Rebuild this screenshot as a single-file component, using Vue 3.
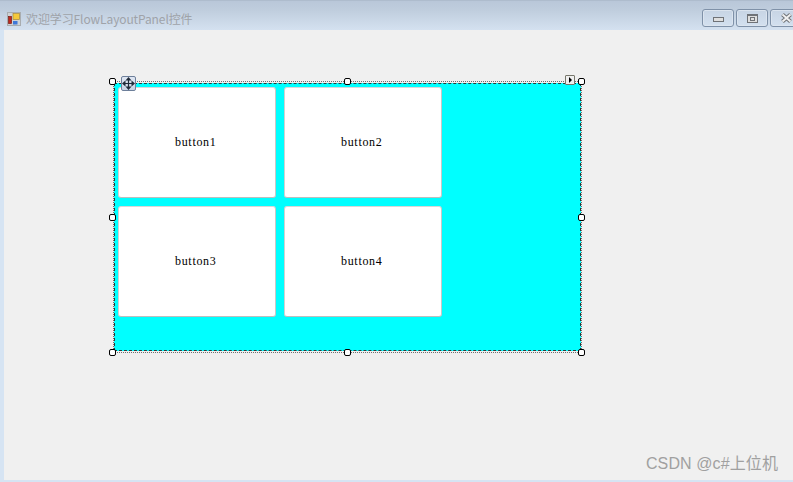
<script setup>
const buttons = ['button1', 'button2', 'button3', 'button4']
const handles = ['tl', 'tc', 'tr', 'ml', 'mr', 'bl', 'bc', 'br']
</script>

<template>
  <div class="window">
    <header class="titlebar">
      <div class="title">
        <svg class="app-icon" width="14" height="14" viewBox="0 0 14 14">
          <rect x="0.5" y="0.5" width="13" height="13" fill="#cfd3d6" stroke="#a9adb0" />
          <rect x="1.5" y="4.5" width="3" height="7" fill="#c0281c" stroke="#7a1a14" stroke-width="0.7" />
          <rect x="6" y="1.5" width="6.5" height="6" fill="#f5c93a" stroke="#a88a3a" stroke-width="0.7" />
          <rect x="6" y="9" width="4.5" height="3.5" fill="#3f78d8" />
        </svg>
        <span class="caption">欢迎学习FlowLayoutPanel控件</span>
      </div>
      <div class="controls">
        <div class="ctl">
          <span class="glyph-min"></span>
        </div>
        <div class="ctl">
          <span class="glyph-max"></span>
        </div>
        <div class="ctl">
          <svg width="13" height="10" viewBox="0 0 13 10">
            <path d="M2.5 1.5 L10.5 8.5 M10.5 1.5 L2.5 8.5" stroke="#6f7277" stroke-width="4" />
            <path d="M2.5 1.5 L10.5 8.5 M10.5 1.5 L2.5 8.5" stroke="#f0f0f0" stroke-width="2" />
          </svg>
        </div>
      </div>
    </header>

    <main class="client">
      <div class="selection">
        <div class="panel">
          <button v-for="b in buttons" :key="b" class="btn">{{ b }}</button>
        </div>
        <span v-for="h in handles" :key="h" class="handle" :class="h"></span>
        <div class="move-glyph">
          <svg width="13" height="13" viewBox="0 0 13 13">
            <path d="M6.5 2 V11 M2 6.5 H11" stroke="#1f2a38" stroke-width="1.2" fill="none" />
            <path d="M6.5 0 L9.5 3.5 H3.5 Z M6.5 13 L9.5 9.5 H3.5 Z M0 6.5 L3.5 3.5 V9.5 Z M13 6.5 L9.5 3.5 V9.5 Z" fill="#1f2a38" />
          </svg>
        </div>
        <div class="smart-tag"><span class="tri"></span></div>
      </div>
      <div class="watermark">CSDN @c#上位机</div>
    </main>
  </div>
</template>

<style scoped>
.window {
  width: 793px;
  height: 482px;
  display: flex;
  flex-direction: column;
  background: #d6e4f3;
  overflow: hidden;
  position: relative;
}
.titlebar {
  height: 30px;
  flex: none;
  display: flex;
  justify-content: space-between;
  box-sizing: border-box;
  padding: 8px 0 0 7px;
  background: linear-gradient(to bottom, #b9c7d9 0, #bfcddd 30%, #d4e1f0 100%);
  border-top: 1px solid #aebccd;
}
.title {
  display: flex;
  align-items: center;
  gap: 5px;
  height: 19px;
}
.app-icon {
  flex: none;
}
.caption {
  font-family: "Noto Sans CJK SC", "Noto Sans", sans-serif;
  font-size: 12px;
  line-height: 19px;
  letter-spacing: -0.1px;
  color: #9fa3a9;
  white-space: nowrap;
}
.controls {
  display: flex;
  gap: 2px;
  margin-right: -9px;
}
.ctl {
  box-sizing: border-box;
  width: 32px;
  height: 18px;
  border: 1px solid #7f91a8;
  border-radius: 3px;
  background: linear-gradient(to bottom, #c7d4e4, #d3e0ef);
  box-shadow: inset 0 0 0 1px #dbe4ef;
  display: flex;
  align-items: center;
  justify-content: center;
}
.glyph-min {
  width: 11px;
  height: 5px;
  box-sizing: border-box;
  margin-top: 3px;
  border: 1px solid #6f7277;
  background: #dedede;
}
.glyph-max {
  width: 11px;
  height: 9px;
  box-sizing: border-box;
  border: 1px solid #6f7277;
  border-top-width: 2px;
  background: #dedede;
  position: relative;
}
.glyph-max::after {
  content: "";
  display: block;
  width: 3px;
  height: 2px;
  margin: 1px auto;
  border: 1px solid #6f7277;
}
.client {
  flex: 1;
  margin: 0 0 2px 4px;
  background: #f0f0f0;
  box-sizing: border-box;
  padding: 53px 0 0 110px;
  position: relative;
}
.selection {
  width: 467px;
  height: 268px;
  position: relative;
}
.selection::before {
  content: "";
  position: absolute;
  top: -2px;
  left: -1px;
  right: -1px;
  bottom: -2px;
  border: 1px dotted #707070;
  pointer-events: none;
}
.selection::after {
  content: "";
  position: absolute;
  inset: 0;
  border: 1px dashed #2a3a3a;
  pointer-events: none;
}
.panel {
  width: 100%;
  height: 100%;
  box-sizing: border-box;
  background: #00ffff;
  padding: 4px;
  display: grid;
  grid-template-columns: repeat(2, 157.5px);
  grid-auto-rows: 110.5px;
  column-gap: 8.5px;
  row-gap: 8.5px;
  align-content: start;
}
.btn {
  appearance: none;
  border: 0;
  border-bottom: 1px solid #bdbdbd;
  border-right: 1px solid #c8c8c8;
  border-left: 1px solid #d0d0d0;
  border-top: 1px solid #d8d8d8;
  border-radius: 3px;
  background: #fff;
  padding: 0 2px 0 0;
  font-family: "Liberation Serif", serif;
  font-size: 12px;
  letter-spacing: 0.7px;
  color: #000;
}
.handle {
  position: absolute;
  z-index: 1;
  width: 7px;
  height: 7px;
  box-sizing: border-box;
  background: #fff;
  border: 1px solid #000;
  border-radius: 2px;
}
.tl { left: -5px; top: -5px; }
.tc { left: 230px; top: -5px; }
.tr { left: 464px; top: -5px; }
.ml { left: -5px; top: 131px; }
.mr { left: 464px; top: 131px; }
.bl { left: -5px; top: 266px; }
.bc { left: 230px; top: 266px; }
.br { left: 464px; top: 266px; }
.move-glyph {
  position: absolute;
  z-index: 1;
  left: 7px;
  top: -7px;
  width: 15px;
  height: 15px;
  box-sizing: border-box;
  border: 1px solid #6d7f9a;
  border-radius: 2px;
  background: linear-gradient(to bottom, #dfe6f2, #c8d4e6);
  display: flex;
  align-items: center;
  justify-content: center;
}
.smart-tag {
  position: absolute;
  z-index: 1;
  left: 451px;
  top: -8px;
  width: 10px;
  height: 10px;
  box-sizing: border-box;
  border: 1px solid #77776c;
  border-radius: 1px;
  background: #f0f0f0;
  display: flex;
  align-items: center;
  justify-content: center;
}
.tri {
  width: 0;
  height: 0;
  border-left: 3px solid #000;
  border-top: 3px solid transparent;
  border-bottom: 3px solid transparent;
}
.watermark {
  position: absolute;
  right: 15px;
  bottom: 6px;
  font-family: "Liberation Sans", "Noto Sans CJK SC", sans-serif;
  font-size: 16px;
  color: #a0a0a0;
  letter-spacing: 0.1px;
  white-space: nowrap;
}
</style>

<style>
html, body {
  margin: 0;
  padding: 0;
  background: #f0f0f0;
}
</style>
